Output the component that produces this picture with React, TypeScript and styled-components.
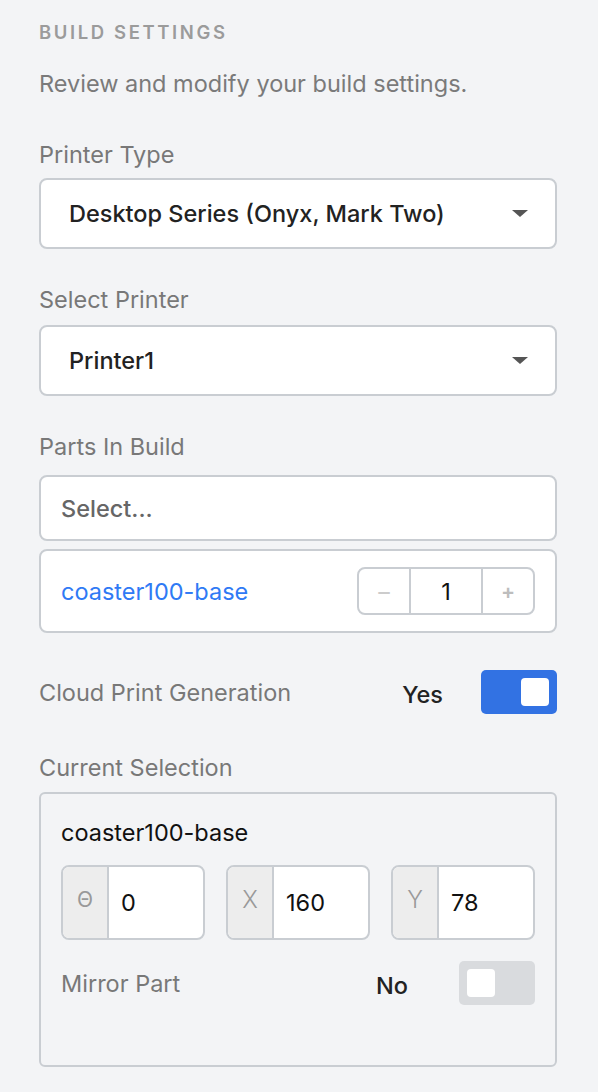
import React from "react";
import styled, { createGlobalStyle } from "styled-components";

const GlobalStyle = createGlobalStyle`
    * {
        box-sizing: border-box;
    }
    body {
        margin: 0;
        background: #f3f4f6;
        font-family: Inter, "Noto Sans", sans-serif;
    }
`

type FieldProps = {
    label: string
    gap: number
    children: React.ReactNode
}

const Field = (props: FieldProps) => {
    return (
        <StyledField>
            <Label style={{ marginBottom: props.gap }}>{props.label}</Label>
            {props.children}
        </StyledField>
    );
};

const Select = (props: { value: string }) => {
    return (
        <SelectBox>
            <SelectValue>{props.value}</SelectValue>
            <Caret viewBox="0 0 16 7">
                <path d="M0 0 H16 L8 7 Z" fill="#555" />
            </Caret>
        </SelectBox>
    );
};

const Toggle = (props: { on: boolean }) => {
    return (
        <Track on={props.on}>
            <Knob />
        </Track>
    );
};

type CoordProps = {
    prefix: string
    value: string
    small?: boolean
}

const CoordInput = (props: CoordProps) => {
    return (
        <Coord>
            <Prefix small={props.small}>{props.prefix}</Prefix>
            <CoordValue>{props.value}</CoordValue>
        </Coord>
    );
};

export default function App() {
    return (
        <Page>
            <GlobalStyle />
            <Title>BUILD SETTINGS</Title>
            <Description>Review and modify your build settings.</Description>

            <Field label="Printer Type" gap={9}>
                <Select value="Desktop Series (Onyx, Mark Two)" />
            </Field>

            <Field label="Select Printer" gap={11}>
                <Select value="Printer1" />
            </Field>

            <Field label="Parts In Build" gap={14}>
                <Placeholder>Select...</Placeholder>
                <PartRow>
                    <PartName>coaster100-base</PartName>
                    <Stepper>
                        <StepButton>−</StepButton>
                        <StepValue>1</StepValue>
                        <StepButton small>+</StepButton>
                    </Stepper>
                </PartRow>
            </Field>

            <SwitchRow>
                <SwitchLabel>Cloud Print Generation</SwitchLabel>
                <SwitchValue space={38}>Yes</SwitchValue>
                <Toggle on={true} />
            </SwitchRow>

            <Field label="Current Selection" gap={10}>
                <SelectionBox>
                    <SelectionName>coaster100-base</SelectionName>
                    <CoordGrid>
                        <CoordInput prefix="Θ" value="0" small />
                        <CoordInput prefix="X" value="160" />
                        <CoordInput prefix="Y" value="78" />
                    </CoordGrid>
                    <SwitchRow compact>
                        <SwitchLabel>Mirror Part</SwitchLabel>
                        <SwitchValue space={51}>No</SwitchValue>
                        <Toggle on={false} />
                    </SwitchRow>
                </SelectionBox>
            </Field>
        </Page>
    );
}

const Page = styled.div`
    width: 598px;
    min-height: 1092px;
    padding: 21px 41px 0 39px;
    background: #f3f4f6;
`

const Title = styled.h2`
    margin: 0;
    font-size: 18.5px;
    line-height: 22px;
    font-weight: 600;
    letter-spacing: 2.6px;
    color: #9b9b9b;
`

const Description = styled.p`
    margin: 27px 0 43px;
    font-size: 23.5px;
    line-height: 28px;
    color: #7a7a7a;
`

const StyledField = styled.div`
    display: flex;
    flex-direction: column;
    margin-bottom: 37px;
`

const Label = styled.div`
    font-size: 23.5px;
    line-height: 28px;
    color: #787878;
`

const Box = styled.div`
    background: #ffffff;
    border: 2px solid #c9cdd2;
    border-radius: 8px;
`

const SelectBox = styled(Box)`
    height: 71px;
    display: flex;
    align-items: center;
    justify-content: space-between;
    padding: 0 27px 0 28px;
`

const SelectValue = styled.span`
    font-size: 23.5px;
    font-weight: 500;
    color: #222222;
`

const Caret = styled.svg`
    width: 16px;
    height: 7px;
`

const Placeholder = styled(Box)`
    height: 66px;
    display: flex;
    align-items: center;
    padding: 0 20px;
    font-size: 23.5px;
    font-weight: 500;
    color: #666666;
`

const PartRow = styled(Box)`
    height: 84px;
    margin-top: 8px;
    display: flex;
    align-items: center;
    justify-content: space-between;
    padding: 0 20px;
`

const PartName = styled.span`
    font-size: 23.5px;
    color: #2f7af5;
`

const Stepper = styled.div`
    display: flex;
    height: 48px;
    border: 2px solid #c9cdd2;
    border-radius: 8px;
    overflow: hidden;
`

const StepButton = styled.div<{ small?: boolean }>`
    width: 50px;
    display: flex;
    align-items: center;
    justify-content: center;
    font-size: ${p => (p.small ? "21px" : "25px")};
    font-weight: ${p => (p.small ? 600 : 400)};
    color: ${p => (p.small ? "#bdbdbd" : "#cccccc")};
`

const StepValue = styled.div`
    width: 74px;
    display: flex;
    align-items: center;
    justify-content: center;
    border-left: 2px solid #c9cdd2;
    border-right: 2px solid #c9cdd2;
    font-size: 23.5px;
    color: #111111;
`

const SwitchRow = styled.div<{ compact?: boolean }>`
    display: flex;
    align-items: center;
    margin: ${p => (p.compact ? "21px 0 0" : "1px 0 40px")};
`

const SwitchLabel = styled.span`
    flex: 1;
    font-size: 23.5px;
    color: #787878;
`

const SwitchValue = styled.span<{ space: number }>`
    margin-right: ${p => p.space}px;
    margin-top: 4px;
    font-size: 23.5px;
    font-weight: 500;
    color: #222222;
`

const Track = styled.div<{ on: boolean }>`
    width: 76px;
    height: 44px;
    border-radius: 5px;
    display: flex;
    align-items: center;
    justify-content: ${p => (p.on ? "flex-end" : "flex-start")};
    padding: 0 8px;
    background: ${p => (p.on ? "#3272e3" : "#d9dbde")};
`

const Knob = styled.div`
    width: 28px;
    height: 28px;
    border-radius: 4px;
    background: #ffffff;
`

const SelectionBox = styled.div`
    height: 275px;
    border: 2px solid #c9cdd2;
    border-radius: 6px;
    padding: 25px 20px 0;
`

const SelectionName = styled.div`
    font-size: 23.5px;
    line-height: 28px;
    color: #111111;
    margin-bottom: 18px;
`

const CoordGrid = styled.div`
    display: grid;
    grid-template-columns: repeat(3, 1fr);
    gap: 21px;
`

const Coord = styled(Box)`
    height: 75px;
    display: flex;
    overflow: hidden;
`

const Prefix = styled.div<{ small?: boolean }>`
    width: 46px;
    display: flex;
    align-items: center;
    justify-content: center;
    padding-bottom: 6px;
    background: #ededed;
    border-right: 2px solid #c9cdd2;
    font-size: ${p => (p.small ? "21px" : "23.5px")};
    font-weight: ${p => (p.small ? 400 : 300)};
    color: #999999;
`

const CoordValue = styled.div`
    flex: 1;
    display: flex;
    align-items: center;
    padding-left: 12px;
    font-size: 23.5px;
    color: #111111;
`
